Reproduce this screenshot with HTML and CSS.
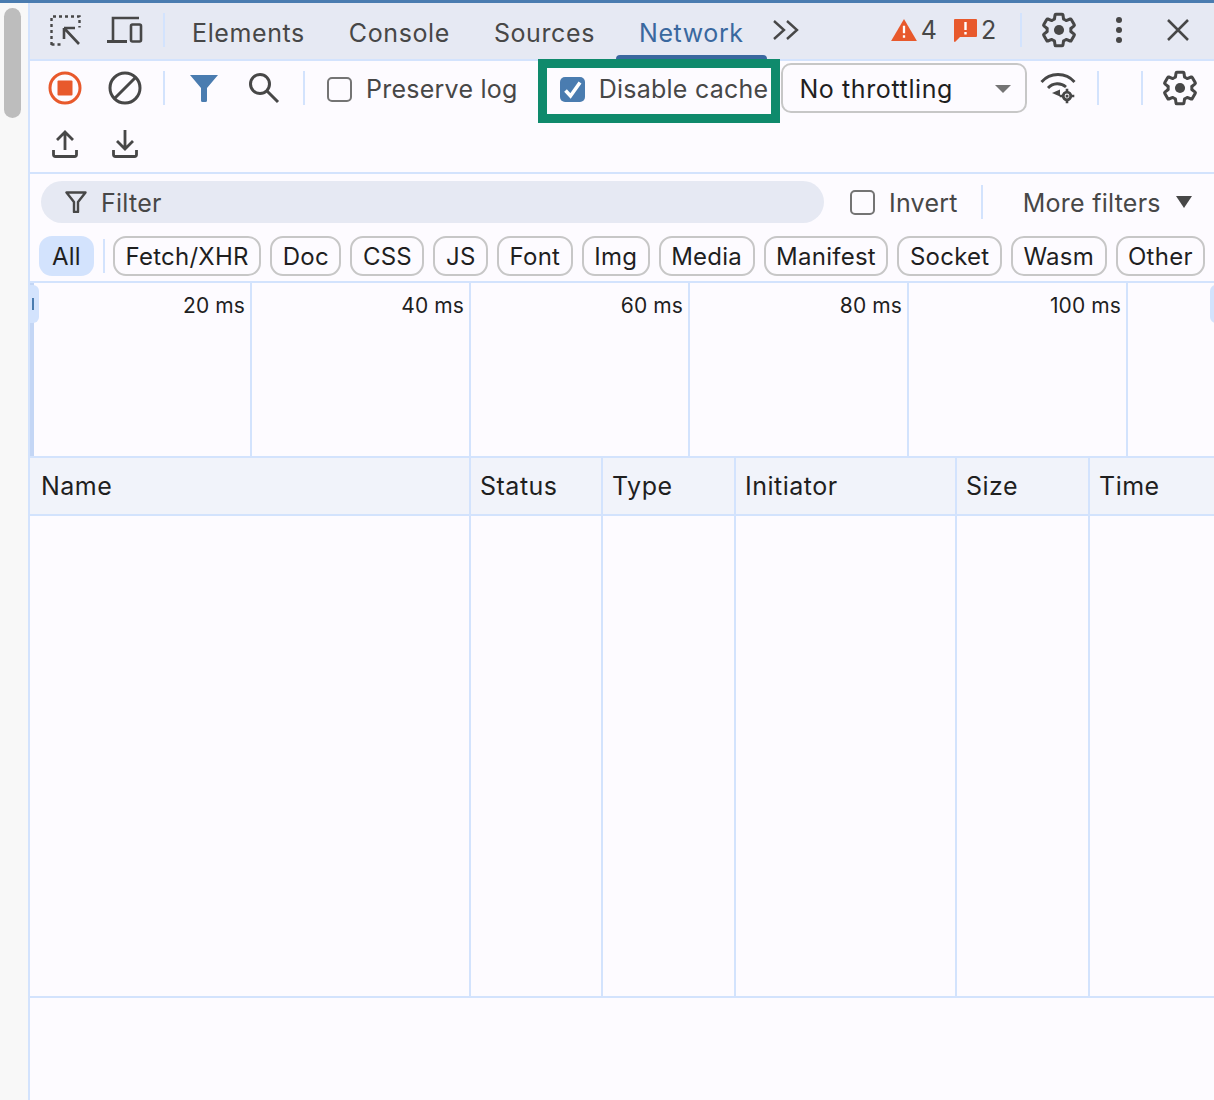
FILE: index.html
```html
<!DOCTYPE html>
<html lang="en">
<head>
    <meta charset="UTF-8">
    <meta name="viewport" content="width=device-width, initial-scale=1.0">
    <title>DevTools Network</title>
    <link rel="stylesheet" href="styles.css">
</head>
<body>
    <svg class="icon-defs" width="0" height="0">
        <symbol id="gear" viewBox="0 0 24 24">
            <path fill="none" stroke="currentColor" stroke-width="1.9" stroke-linejoin="round" d="M19.43 12.98c.04-.32.07-.64.07-.98s-.03-.66-.07-.98l2.11-1.65c.19-.15.24-.42.12-.64l-2-3.46c-.12-.22-.39-.3-.61-.22l-2.49 1c-.52-.4-1.08-.73-1.69-.98l-.38-2.65C14.46 2.18 14.25 2 14 2h-4c-.25 0-.46.18-.49.42l-.38 2.65c-.61.25-1.17.59-1.69.98l-2.49-1c-.23-.09-.49 0-.61.22l-2 3.46c-.13.22-.07.49.12.64l2.11 1.65c-.04.32-.07.65-.07.98s.03.66.07.98l-2.11 1.65c-.19.15-.24.42-.12.64l2 3.46c.12.22.39.3.61.22l2.49-1c.52.4 1.08.73 1.69.98l.38 2.65c.03.24.24.42.49.42h4c.25 0 .46-.18.49-.42l.38-2.65c.61-.25 1.17-.59 1.69-.98l2.49 1c.23.09.49 0 .61-.22l2-3.46c.12-.22.07-.49-.12-.64l-2.11-1.65z"/>
            <circle cx="12" cy="12" r="3.2" fill="currentColor"/>
        </symbol>
    </svg>

    <div class="top-line"></div>
    <div class="page">
        <div class="gutter"><div class="scroll-thumb"></div></div>

        <div class="panel">
            <!-- main tab bar -->
            <div class="tabbar">
                <span class="tool">
                    <svg width="31" height="31" viewBox="0 0 31 31" fill="none" stroke="currentColor" stroke-width="2.4">
                        <path stroke-dasharray="3 3" d="M1.500 30V1.500h28v11"/>
                        <path stroke-dasharray="3 3" d="M1.500 29.500h9"/>
                        <path stroke-width="2.600" d="M14 13h11M14 13v11M14 13l15 16"/>
                    </svg>
                </span>
                <span class="tool">
                    <svg width="36" height="28" viewBox="0 0 36 28" fill="none" stroke="currentColor" stroke-width="2.6">
                        <path d="M6 24V2h26"/>
                        <path stroke-width="3" d="M0 25.500h20"/>
                        <rect x="24" y="8.500" width="10" height="17" rx="1.500"/>
                    </svg>
                </span>
                <span class="sep"></span>
                <div class="tabs">
                    <span class="tab">Elements</span>
                    <span class="tab">Console</span>
                    <span class="tab">Sources</span>
                    <span class="tab active">Network</span>
                </div>
                <svg class="more-tabs" width="27" height="22" viewBox="0 0 27 22" fill="none" stroke="currentColor" stroke-width="2.4">
                    <path d="M2 2l10 9-10 9M15 2l10 9-10 9"/>
                </svg>
                <div class="counts">
                    <svg width="26" height="22" viewBox="0 0 27 23"><path fill="#e8592c" d="M13.500 0L27 23H0z"/><path fill="#fff" d="M12.300 7h2.400v8h-2.400zM12.300 17h2.400v2.600h-2.400z"/></svg>
                    <span class="count">4</span>
                    <svg class="issue-icon" width="23" height="24" viewBox="0 0 23 24"><path fill="#e8592c" d="M1 1h21a1 1 0 0 1 1 1v16a1 1 0 0 1-1 1H6l-5 5a1 1 0 0 1-1-1V2a1 1 0 0 1 1-1z"/><path fill="#fff" d="M10.300 4h2.400v8h-2.400zM10.300 14h2.400v2.600h-2.400z"/></svg>
                    <span class="count">2</span>
                </div>
                <span class="sep sep-counts"></span>
                <svg class="gear-tab" width="38" height="38"><use href="#gear"/></svg>
                <svg class="dots" width="8" height="28" viewBox="0 0 8 28" fill="currentColor">
                    <circle cx="4" cy="4" r="3"/><circle cx="4" cy="14" r="3"/><circle cx="4" cy="24" r="3"/>
                </svg>
                <svg class="close" width="22" height="22" viewBox="0 0 22 22" fill="none" stroke="currentColor" stroke-width="2.5">
                    <path d="M1 1l20 20M21 1L1 21"/>
                </svg>
            </div>

            <!-- network toolbar -->
            <div class="toolbar">
                <div class="toolbar-row">
                    <span class="tool">
                        <svg width="34" height="34" viewBox="0 0 34 34"><circle cx="17" cy="17" r="15" fill="none" stroke="#e8592c" stroke-width="3"/><rect x="9.500" y="9.500" width="15" height="15" rx="1" fill="#e8592c"/></svg>
                    </span>
                    <span class="tool">
                        <svg width="34" height="34" viewBox="0 0 34 34" fill="none" stroke="currentColor" stroke-width="3"><circle cx="17" cy="17" r="15"/><path d="M7 27L27 7"/></svg>
                    </span>
                    <span class="sep"></span>
                    <span class="tool tool-filter">
                        <svg width="28" height="27" viewBox="0 0 28 27"><path fill="#4a7cb0" d="M0 0h28L17 13v12.500a1.500 1.500 0 0 1-1.500 1.500h-3a1.500 1.500 0 0 1-1.500-1.500V13z"/></svg>
                    </span>
                    <span class="tool">
                        <svg width="32" height="32" viewBox="0 0 32 32" fill="none" stroke="currentColor" stroke-width="3"><circle cx="12" cy="12" r="9.500"/><path d="M19 19l11 11"/></svg>
                    </span>
                    <span class="sep sep-search"></span>
                    <label class="check check-preserve"><span class="box"></span>Preserve log</label>
                    <label class="check check-cache">
                        <span class="box checked">
                            <svg width="25" height="25" viewBox="0 0 25 25" fill="none" stroke="#fff" stroke-width="3.600"><path d="M5.500 13.500l5 5.500L20 5.500"/></svg>
                        </span>Disable cache
                    </label>
                    <div class="throttle">
                        <span>No throttling</span>
                        <span class="caret"></span>
                    </div>
                    <svg class="wifi" width="36" height="32" viewBox="0 0 36 32" fill="none" stroke="currentColor" stroke-width="2.800">
                        <path d="M1.500 10C10 0 26 0 34.500 10"/>
                        <path d="M8 16c5-5.500 13-5.500 18-1"/>
                        <path fill="currentColor" stroke="none" d="M12 21l8-3.500v7z"/>
                        <circle cx="27" cy="24" r="3.800" stroke-width="2.800"/>
                        <path stroke-width="2.600" stroke-dasharray="2.500 3.600" d="M27 16.800v14.500M19.800 24h14.500"/>
                    </svg>
                    <span class="sep sep-wifi"></span>
                    <span class="sep sep-empty"></span>
                    <svg class="gear-bar" width="38" height="38"><use href="#gear"/></svg>
                </div>
                <div class="toolbar-row row-export">
                    <span class="tool">
                        <svg width="26" height="28" viewBox="0 0 26 28" fill="none" stroke="currentColor" stroke-width="2.800"><path d="M13 20V2M5 10l8-8 8 8M1.500 20v4.500a2 2 0 0 0 2 2h19a2 2 0 0 0 2-2V20"/></svg>
                    </span>
                    <span class="tool">
                        <svg width="26" height="28" viewBox="0 0 26 28" fill="none" stroke="currentColor" stroke-width="2.800"><path d="M13 0v19M5 11l8 8 8-8M1.500 20v4.500a2 2 0 0 0 2 2h19a2 2 0 0 0 2-2V20"/></svg>
                    </span>
                </div>
            </div>

            <!-- filter bar -->
            <div class="filterbar">
                <div class="filter-row">
                    <div class="filter-input">
                        <svg width="22" height="22" viewBox="0 0 22 22" fill="none" stroke="currentColor" stroke-width="2.400"><path d="M1.500 1.500h19l-7.500 9.500v10h-4v-10z" stroke-linejoin="round"/></svg>
                        <span class="filter-text">Filter</span>
                    </div>
                    <label class="check check-invert"><span class="box"></span><span class="filter-text">Invert</span></label>
                    <span class="sep sep-invert"></span>
                    <span class="more-filters filter-text">More filters</span>
                    <span class="more-caret"></span>
                </div>
                <div class="chips">
                    <span class="chip chip-all">All</span>
                    <span class="sep sep-chip"></span>
                    <span class="chip">Fetch/XHR</span>
                    <span class="chip">Doc</span>
                    <span class="chip">CSS</span>
                    <span class="chip">JS</span>
                    <span class="chip">Font</span>
                    <span class="chip">Img</span>
                    <span class="chip">Media</span>
                    <span class="chip">Manifest</span>
                    <span class="chip">Socket</span>
                    <span class="chip">Wasm</span>
                    <span class="chip">Other</span>
                </div>
            </div>

            <!-- timeline overview -->
            <div class="overview">
                <span class="handle handle-left"></span>
                <span class="handle handle-right"></span>
                <div class="tick">20 ms</div>
                <div class="tick">40 ms</div>
                <div class="tick">60 ms</div>
                <div class="tick">80 ms</div>
                <div class="tick">100 ms</div>
            </div>

            <!-- request table -->
            <div class="grid grid-head">
                <div>Name</div>
                <div>Status</div>
                <div>Type</div>
                <div>Initiator</div>
                <div>Size</div>
                <div>Time</div>
            </div>
            <div class="grid grid-body">
                <div></div><div></div><div></div><div></div><div></div><div></div>
            </div>
        </div>
    </div>

    <div class="highlight"></div>
</body>
</html>
```

FILE: styles.css
```css
body {
    margin: 0;
    width: 1214px;
    height: 1100px;
    overflow: hidden;
    position: relative;
    font-family: Inter, "Noto Sans", sans-serif;
    font-size: 25px;
    letter-spacing: 0.25px;
    color: #474747;
    background-color: #fdfbff;
}
.icon-defs {
    position: absolute;
}
.top-line {
    height: 3px;
    background-color: #4a7cb0;
}
.page {
    display: flex;
    height: 1097px;
}
.gutter {
    width: 28px;
    flex: none;
    background-color: #f8f8f8;
    padding: 5px 0 0 4px;
    box-sizing: border-box;
}
.scroll-thumb {
    width: 17px;
    height: 110px;
    border-radius: 9px;
    background-color: #bdbdbd;
}
.panel {
    flex: 1;
    min-width: 0;
    border-left: 2px solid #d3e3fd;
}
.tool {
    width: 60px;
    flex: none;
    display: flex;
    justify-content: center;
    align-items: center;
}
.sep {
    width: 2px;
    height: 34px;
    flex: none;
    margin: 0 8px;
    background-color: #d3e3fd;
}

/* main tab bar */
.tabbar {
    height: 56px;
    display: flex;
    align-items: center;
    padding-left: 5px;
    background-color: #e6e9f3;
    border-bottom: 2px solid #d3e3fd;
}
.tabbar .tool,
.tabbar > .sep {
    margin-top: -2px;
}
.tabs {
    display: flex;
    gap: 44px;
    margin-left: 19px;
}
.tab {
    position: relative;
    height: 56px;
    line-height: 60px;
    letter-spacing: 0.6px;
    white-space: nowrap;
}
.tab.active {
    color: #3a689f;
}
.tab.active::after {
    content: "";
    position: absolute;
    left: -23px;
    right: -23px;
    bottom: 0;
    height: 4px;
    border-radius: 4px 4px 0 0;
    background-color: #3a689f;
}
.more-tabs {
    margin: -2px 0 0 28px;
    flex: none;
}
.counts {
    display: flex;
    align-items: center;
    margin-left: 92px;
    margin-top: -2px;
}
.count {
    margin-left: 4px;
}
.issue-icon {
    margin-left: 17px;
}
.tabbar > .sep-counts {
    margin: -2px 0 0 23px;
}
.gear-tab {
    margin: -2px 0 0 18px;
    flex: none;
}
.dots {
    margin: -2px 0 0 37px;
    flex: none;
}
.close {
    margin: -2px 0 0 44px;
    flex: none;
}

/* network toolbar */
.toolbar {
    height: 111px;
    border-bottom: 2px solid #d3e3fd;
}
.toolbar-row {
    height: 54px;
    display: flex;
    align-items: center;
    padding-left: 5px;
}
.row-export {
    height: 57px;
    box-sizing: border-box;
    align-items: flex-start;
    padding-top: 15px;
}
.tool-filter {
    margin-left: 1px;
}
.sep-search {
    margin: 0 22px 0 9px;
}
.check {
    display: flex;
    align-items: center;
    white-space: nowrap;
}
.check-preserve,
.check-cache {
    padding-top: 2px;
}
.box {
    width: 25px;
    height: 25px;
    box-sizing: border-box;
    flex: none;
    margin-right: 14px;
    border: 2px solid #747474;
    border-radius: 5px;
    background-color: #fdfbff;
}
.box.checked {
    border: none;
    background-color: #4a7cb0;
}
.box.checked svg {
    display: block;
}
.check-cache {
    margin-left: 42px;
}
.throttle {
    width: 246px;
    height: 50px;
    box-sizing: border-box;
    flex: none;
    margin-left: 13px;
    display: flex;
    align-items: center;
    justify-content: space-between;
    padding: 2px 14px 0 16px;
    border: 2px solid #c7c7c7;
    border-radius: 10px;
    letter-spacing: 0.6px;
    color: #1f1f1f;
}
.caret {
    width: 0;
    height: 0;
    border-left: 8px solid transparent;
    border-right: 8px solid transparent;
    border-top: 8px solid #747474;
}
.wifi {
    margin-left: 13px;
    flex: none;
}
.sep-wifi {
    margin: 0 0 0 21px;
}
.sep-empty {
    margin: 0 0 0 42px;
}
.gear-bar {
    margin-left: 18px;
    flex: none;
}

/* filter bar */
.filterbar {
    height: 109px;
    padding: 7px 0 0 9px;
    box-sizing: border-box;
    border-bottom: 2px solid #d3e3fd;
}
.filter-row {
    height: 42px;
    display: flex;
    align-items: center;
    margin-left: 2px;
}
.filter-input {
    width: 783px;
    height: 42px;
    flex: none;
    box-sizing: border-box;
    display: flex;
    align-items: center;
    gap: 14px;
    padding-left: 24px;
    border-radius: 21px;
    background-color: #e6e9f3;
}
.filter-text {
    padding-top: 2px;
}
.check-invert {
    margin-left: 26px;
}
.sep-invert {
    margin: 0 0 0 23px;
}
.more-filters {
    margin-left: 40px;
    white-space: nowrap;
}
.more-caret {
    margin-left: 15px;
    width: 0;
    height: 0;
    border-left: 8px solid transparent;
    border-right: 8px solid transparent;
    border-top: 12px solid #474747;
}
.chips {
    display: flex;
    align-items: center;
    gap: 9px;
    margin-top: 13px;
    font-size: 24px;
    color: #1f1f1f;
}
.chip {
    height: 40px;
    box-sizing: border-box;
    flex: none;
    display: flex;
    align-items: center;
    padding: 0 10.5px;
    border: 2px solid #c7c7c7;
    border-radius: 13px;
    white-space: nowrap;
}
.chip-all {
    border: none;
    padding: 0 13px;
    background-color: #d3e3fd;
}
.sep-chip {
    height: 34px;
    margin: 0 -1px 0 0;
}

/* timeline overview */
.overview {
    height: 173px;
    position: relative;
    display: flex;
    font-size: 21px;
    letter-spacing: 0.1px;
    color: #1f1f1f;
    border-left: 4px solid #c4d6f5;
    box-sizing: border-box;
}
.tick {
    width: 219px;
    flex: none;
    box-sizing: border-box;
    padding: 10px 5px 0 0;
    text-align: right;
    border-right: 2px solid #d3e3fd;
    white-space: nowrap;
}
.handle + .handle + .tick {
    width: 218px;
}
.handle {
    position: absolute;
    top: 2px;
    width: 9px;
    height: 38px;
    background-color: #d3e3fd;
}
.handle-left {
    left: -4px;
    border-radius: 0 6px 6px 0;
}
.handle-left::after {
    content: "";
    position: absolute;
    left: 2px;
    top: 13px;
    width: 2px;
    height: 12px;
    background-color: #4a7cb0;
}
.handle-right {
    left: 1176px;
    border-radius: 6px 0 0 6px;
}

/* request table */
.grid {
    display: grid;
    grid-template-columns: 441px 132px 133px 221px 133px 1fr;
}
.grid > div {
    box-sizing: border-box;
    border-right: 2px solid #d3e3fd;
    padding-left: 9px;
}
.grid > div:first-child {
    padding-left: 11px;
}
.grid > div:last-child {
    border-right: none;
}
.grid-head {
    height: 60px;
    align-items: stretch;
    line-height: 56px;
    letter-spacing: 0.5px;
    color: #1f1f1f;
    background-color: #f1f3fa;
    border-top: 2px solid #d3e3fd;
    border-bottom: 2px solid #d3e3fd;
    box-sizing: border-box;
}
.grid-body {
    height: 482px;
    border-bottom: 2px solid #d3e3fd;
    box-sizing: border-box;
}

/* green callout round the checkbox */
.highlight {
    position: absolute;
    left: 538px;
    top: 59px;
    width: 242px;
    height: 64px;
    box-sizing: border-box;
    border: 9px solid #0f8a6c;
}
```
